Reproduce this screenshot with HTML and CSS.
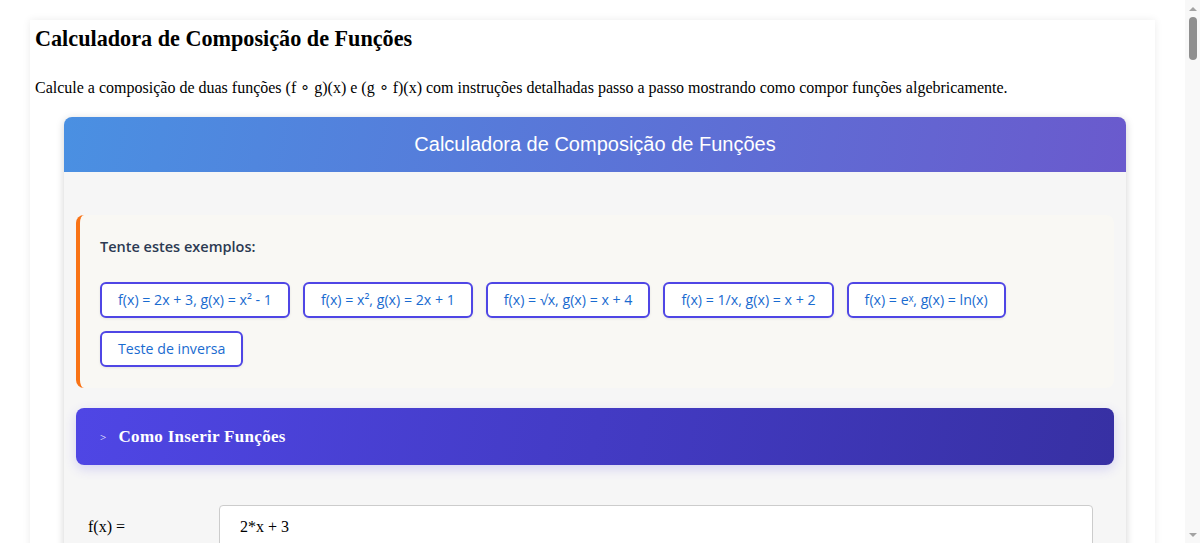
FILE: index.html
```html
<!DOCTYPE html>
<html lang="pt">
  <head>
    <meta charset="UTF-8" />
    <meta name="viewport" content="width=device-width, initial-scale=1.0" />
    <title>Calculadora de Composição de Funções</title>
    <link rel="stylesheet" href="styles.css">
  </head>

  <body>
    <div class="page">
      <h2 class="page-title">Calculadora de Composição de Funções</h2>
      <p class="intro">Calcule a composição de duas funções (f ∘ g)(x) e (g ∘ f)(x) com instruções detalhadas passo a passo mostrando como compor funções algebricamente.</p>

      <div class="calculator">
        <div class="calc-header">Calculadora de Composição de Funções</div>
        <div class="calc-body">
          <div class="examples">
            <div class="examples-title">Tente estes exemplos:</div>
            <div class="example-list">
              <button class="example">f(x) = 2x + 3, g(x) = x² - 1</button>
              <button class="example">f(x) = x², g(x) = 2x + 1</button>
              <button class="example">f(x) = √x, g(x) = x + 4</button>
              <button class="example">f(x) = 1/x, g(x) = x + 2</button>
              <button class="example">f(x) = eˣ, g(x) = ln(x)</button>
              <button class="example">Teste de inversa</button>
            </div>
          </div>

          <div class="help-toggle">
            <span class="arrow">&gt;</span>
            <span>Como Inserir Funções</span>
          </div>

          <div class="form">
            <div class="form-row">
              <label for="fx">f(x) =</label>
              <input id="fx" type="text" value="2*x + 3">
            </div>
            <div class="form-row">
              <label for="gx">g(x) =</label>
              <input id="gx" type="text" value="x^2 - 1">
            </div>
            <div class="form-row">
              <label for="op">Calcular</label>
              <input id="op" type="text" value="(f ∘ g)(x)">
            </div>
          </div>
        </div>
      </div>
    </div>

    <div class="scrollbar">
      <span class="scroll-up"></span>
      <span class="scroll-thumb"></span>
      <span class="scroll-down"></span>
    </div>
  </body>

</html>
```

FILE: styles.css
```css
body {
  margin: 0;
  padding: 0 15px 0 0;
  background: #fff;
  font-family: "Liberation Serif", "Times New Roman", serif;
  color: #000;
}

.page {
  margin: 20px 30px;
  padding: 5px 5px 40px;
  background: #fff;
  box-shadow: 0 0 8px rgba(0, 0, 0, 0.08);
}

.page-title {
  margin: 0;
  font-size: 22.2px;
  line-height: 27px;
  font-weight: bold;
}

.intro {
  margin: 26px 0 19px;
  font-size: 16px;
  line-height: 20px;
}

.calculator {
  margin: 0 24px 0 29px;
  border-radius: 8px;
  overflow: hidden;
  background: #f6f6f6;
  box-shadow: 0 2px 8px rgba(0, 0, 0, 0.18);
}

.calc-header {
  height: 55px;
  display: flex;
  align-items: center;
  justify-content: center;
  background: linear-gradient(100deg, #4a90e2, #6a5acd);
  color: #fff;
  font-family: "Liberation Sans", Arial, sans-serif;
  font-size: 20px;
}

.calc-body {
  padding: 43px 12px 40px;
}

.examples {
  background: #f9f8f4;
  border-left: 4px solid #f97316;
  border-radius: 8px;
  padding: 22px 20px 21px;
  font-family: "Open Sans", sans-serif;
}

.examples-title {
  font-size: 14.5px;
  font-weight: 600;
  color: #2c3a52;
  margin-bottom: 26px;
}

.example-list {
  display: flex;
  flex-wrap: wrap;
  gap: 13px 13px;
}

.example {
  background: #fff;
  border: 2px solid #4f46e5;
  border-radius: 6px;
  padding: 7px 16px;
  font-family: "Open Sans", sans-serif;
  font-size: 14.2px;
  line-height: 18px;
  color: #1a6bd0;
  box-shadow: 0 1px 3px rgba(0, 0, 0, 0.08);
}

.help-toggle {
  margin-top: 20px;
  height: 57px;
  padding: 0 24px;
  display: flex;
  align-items: center;
  gap: 12px;
  border-radius: 8px;
  background: linear-gradient(100deg, #4f46e5, #3730a3);
  box-shadow: 0 4px 12px rgba(79, 70, 229, 0.2);
  color: #fff;
  font-size: 17px;
  font-weight: bold;
  letter-spacing: 0.3px;
}

.help-toggle .arrow {
  font-size: 11px;
  font-weight: normal;
}

.form {
  margin-top: 40px;
  padding: 0 21px 0 12px;
}

.form-row {
  display: flex;
  align-items: center;
  margin-bottom: 20px;
}

.form-row label {
  width: 131px;
  font-size: 16px;
}

.form-row input {
  flex: 1;
  height: 44px;
  box-sizing: border-box;
  padding: 0 20px;
  border: 1px solid #ccc;
  border-radius: 4px;
  background: #fff;
  font-family: "Liberation Serif", "Times New Roman", serif;
  font-size: 16px;
}

.scrollbar {
  position: fixed;
  top: 0;
  right: 0;
  bottom: 0;
  width: 15px;
  background: #f8f8f8;
  display: flex;
  flex-direction: column;
  align-items: center;
}

.scroll-up,
.scroll-down {
  width: 0;
  height: 0;
  border-left: 4px solid transparent;
  border-right: 4px solid transparent;
  margin: 7px 0 6px;
}

.scroll-up {
  border-bottom: 4px solid #a3a3a3;
}

.scroll-down {
  border-top: 4px solid #a3a3a3;
  margin-top: auto;
}

.scroll-thumb {
  width: 8px;
  height: 43px;
  border-radius: 4px;
  background: #8f8f8f;
}
```
